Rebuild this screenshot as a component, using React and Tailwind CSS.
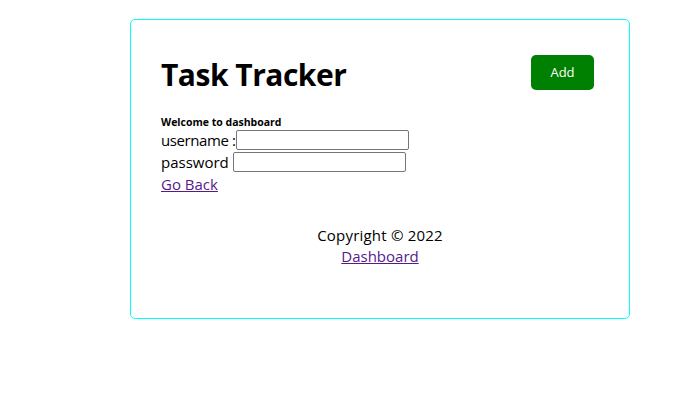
export default function App() {
  return (
    <div className="min-h-[400px] bg-white pt-[19px] pl-[130px] font-['Open_Sans',sans-serif] text-black">
      <div className="w-[500px] h-[300px] border border-[#00ffff] rounded-[5px] p-[30px] box-border">
        {/* Header */}
        <header className="flex items-center justify-between mb-[20px]">
          <h1 className="text-[30px] font-bold leading-none tracking-[-0.5px] pt-[4px]">Task Tracker</h1>
          <button className="m-[5px] w-[63px] h-[35px] bg-[#008000] text-white text-[13px] rounded-[5px]">
            Add
          </button>
        </header>

        <h5 className="text-[10.5px] font-bold leading-[13px] pt-[1px]">Welcome to dashboard</h5>
        <div className="text-[15px] leading-[22px]">
          <div className="flex items-center">
            <span className="tracking-[-0.4px]">username :</span>
            <input type="text" className="w-[173px] h-[20px] border border-[#767676] rounded-[2px]" />
          </div>
          <div className="flex items-center">
            <span className="mr-[4px]">password</span>
            <input type="password" className="w-[173px] h-[20px] border border-[#767676] rounded-[2px]" />
          </div>
          <a href="#" className="text-[#551a8b] underline">Go Back</a>
        </div>

        <footer className="mt-[30px] text-center text-[15px] leading-[21px]">
          <p className="tracking-[0.2px]">Copyright &copy; 2022</p>
          <a href="#" className="text-[#551a8b] underline">Dashboard</a>
        </footer>
      </div>
    </div>
  )
}
